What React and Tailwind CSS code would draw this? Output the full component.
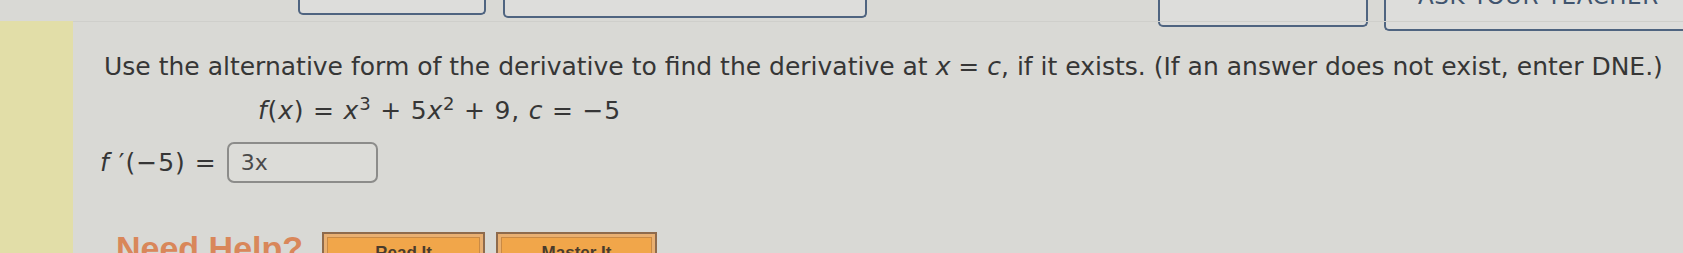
import React from 'react';

const TopButton = ({ className, label, labelClass }) => (
  <div
    className={`shrink-0 flex items-end justify-center border-2 border-t-0 border-[#4f6480] rounded-b-[5px] bg-[#dddddb] overflow-hidden ${className}`}
  >
    <span className={`font-['DejaVu_Sans',sans-serif] text-[#40546e] tracking-wide leading-none ${labelClass}`}>
      {label}
    </span>
  </div>
);

const HelpButton = ({ label, className }) => (
  <div className={`shrink-0 h-[26px] border-2 border-b-0 border-[#8f6b4c] bg-[#e9b072] p-[3px] pb-0 ${className}`}>
    <div className="h-full border border-b-0 border-[#c98a45] bg-[#f1a64a] flex justify-center pt-[6px]">
      <span className="font-['Liberation_Sans',Arial,sans-serif] font-bold text-[17px] leading-none text-[#4a3b2c]">
        {label}
      </span>
    </div>
  </div>
);

export default function App() {
  return (
    <div className="w-[1683px] h-[253px] overflow-hidden bg-[#d9d9d5] text-[#363636]">
      {/* tab strip, cut off at the top of the photo */}
      <div className="h-[21px] flex items-start">
        <div className="w-[298px] shrink-0" />
        <TopButton className="w-[188px] h-[15px]" label="" />
        <div className="w-[17px] shrink-0" />
        <TopButton className="w-[364px] h-[18px]" label="" />
        <div className="w-[291px] shrink-0" />
        <TopButton className="w-[210px] h-[27px] pb-[22px]" label="MY NOTES" labelClass="text-[16px]" />
        <div className="w-[16px] shrink-0" />
        <TopButton className="w-[320px] h-[31px] pb-[21px] rounded-br-none border-r-0 justify-start" label="ASK YOUR TEACHER" labelClass="text-[23px] pl-[32px]" />
      </div>

      <div className="flex h-[232px]">
        <div className="w-[73px] shrink-0 bg-[#e2dea8]" />
        <div className="flex-1 pl-[31px] pt-[30px] border-t border-[#cfcfcb] font-['DejaVu_Sans',Verdana,sans-serif]">
          <p className="text-[25px] leading-[30px] whitespace-nowrap">
            Use the alternative form of the derivative to find the derivative at <i>x</i> = <i>c</i>, if it exists. (If an answer does not exist, enter DNE.)
          </p>

          <p className="mt-[14px] pl-[154px] text-[25px] leading-[30px] whitespace-nowrap tracking-[0.8px]">
            <i>f</i>(<i>x</i>) = <i>x</i>
            <sup className="text-[18px]">3</sup> + 5<i>x</i>
            <sup className="text-[18px]">2</sup> + 9, <i>c</i> = −5
          </p>

          <div className="mt-[16px] -ml-[4px] flex items-center gap-[10px]">
            <span className="text-[25px] leading-[30px] whitespace-nowrap tracking-[1px]">
              <i>f</i> ′(−5) =
            </span>
            <div className="w-[151px] h-[41px] rounded-[7px] border-2 border-[#8c8c8a] bg-[#dcdcd8] flex items-center pl-[12px]">
              <span className="text-[22px] text-[#4a4a4a]">3x</span>
            </div>
          </div>

          <div className="mt-[49px] ml-[12px] flex items-start">
            <span className="font-['Liberation_Sans',Arial,sans-serif] font-bold text-[34px] leading-none text-[#d9875a] -mt-[1px] whitespace-nowrap">
              Need Help?
            </span>
            <HelpButton label="Read It" className="ml-[19px] w-[163px]" />
            <HelpButton label="Master It" className="ml-[11px] w-[161px]" />
          </div>
        </div>
      </div>
    </div>
  );
}
